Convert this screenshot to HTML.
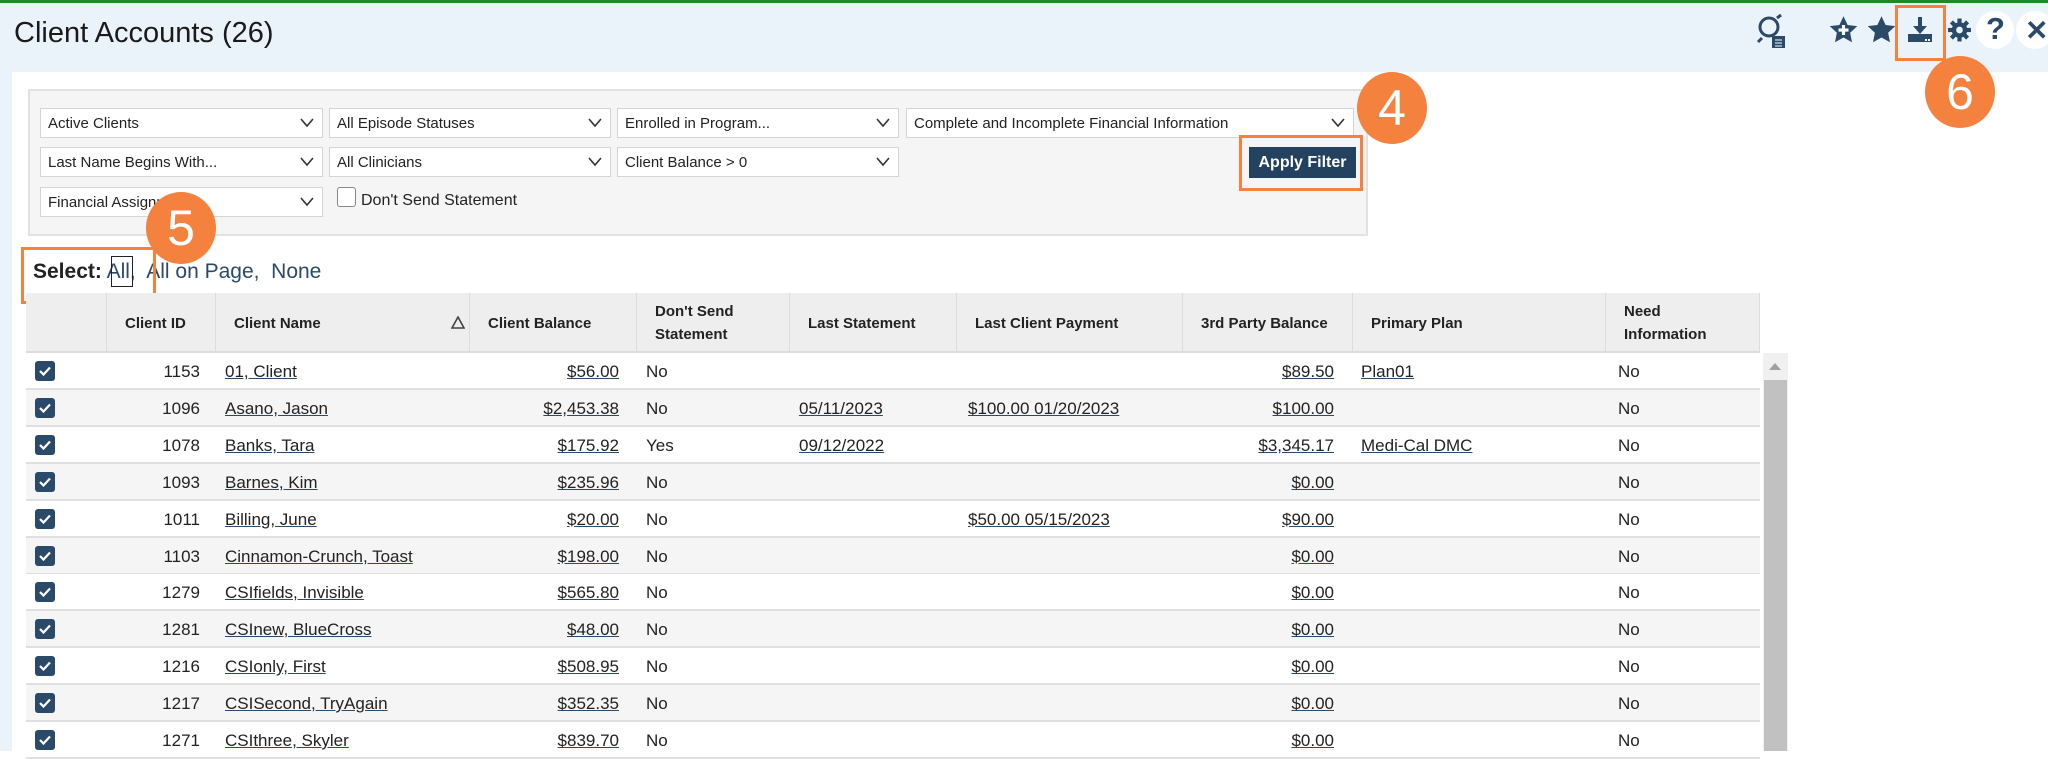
<!DOCTYPE html>
<html><head><meta charset="utf-8"><style>
*{box-sizing:border-box;margin:0;padding:0}
body{width:2048px;height:751px;overflow:hidden;background:#fff;font-family:"Liberation Sans",sans-serif;color:#222;position:relative}
.a{position:absolute;white-space:nowrap}
.dd{position:absolute;height:30px;background:#fff;border:1px solid #d4d4d4;font-size:15px;padding:6px 7px;color:#222}
.dd svg{position:absolute;right:8px;top:9px}
.hd{position:absolute;top:293px;height:60px;font-size:15px;font-weight:bold;display:flex;align-items:center;border-left:1px solid #ddd;padding-left:18px;line-height:23px}
.row{position:absolute;left:26px;width:1734px;height:37px;border-bottom:2px solid #e0e0e0;font-size:17px}
.row span{position:absolute;top:9px;white-space:nowrap}
.u{text-decoration:underline;text-decoration-color:#2b4a6a}
.cb{position:absolute;left:9px;top:8px;width:20px;height:20px;background:#2b4a6a;border-radius:3px}
.r{text-align:right}
.circ{position:absolute;width:70px;height:72px;border-radius:50%;background:#f5813f;color:#fff;font-size:50px;text-align:center;line-height:72px}
.ob{position:absolute;border:3px solid #f5813f}
</style></head><body>
<div class="a" style="left:0;top:0;width:2048px;height:3px;background:#1d8a2a"></div>
<div class="a" style="left:0;top:3px;width:2048px;height:69px;background:#eaf2fa"></div>
<div class="a" style="left:0;top:72px;width:12px;height:679px;background:#eaf2fa"></div>
<div class="a" style="left:14px;top:17px;font-size:29px;color:#1a1a1a">Client Accounts (26)</div>
<svg class="a" style="left:1755px;top:12px" width="36" height="38" viewBox="0 0 36 38"><circle cx="14" cy="15" r="9" fill="none" stroke="#2b4a6a" stroke-width="3"/><path d="M7 26 L3 30 M22 6 L26 3" stroke="#2b4a6a" stroke-width="3"/><rect x="17" y="24" width="13" height="12" fill="#2b4a6a"/><path d="M20 28h7M20 31h7M20 34h7" stroke="#fff" stroke-width="1"/></svg>
<svg class="a" style="left:1828px;top:15px" width="31" height="30" viewBox="0 0 24 24"><path d="M12 1l3.3 7 7.7.9-5.7 5.3 1.5 7.6L12 18l-6.8 3.8 1.5-7.6L1 8.9 8.7 8z" fill="#2b4a6a"/><path d="M12 8v8M8 12h8" stroke="#fff" stroke-width="2.5"/></svg>
<svg class="a" style="left:1866px;top:15px" width="31" height="30" viewBox="0 0 24 24"><path d="M12 1l3.3 7 7.7.9-5.7 5.3 1.5 7.6L12 18l-6.8 3.8 1.5-7.6L1 8.9 8.7 8z" fill="#2b4a6a"/></svg>
<svg class="a" style="left:1906px;top:15px" width="28" height="28" viewBox="0 0 28 28"><path d="M14 2v14" stroke="#2b4a6a" stroke-width="4"/><path d="M7 11l7 8 7-8z" fill="#2b4a6a"/><rect x="2" y="19" width="24" height="8" fill="#2b4a6a"/><rect x="19" y="24" width="2" height="2" fill="#fff"/><rect x="22" y="24" width="2" height="2" fill="#fff"/></svg>
<div class="ob" style="left:1895px;top:5px;width:51px;height:56px"></div>
<svg class="a" style="left:1947px;top:17px" width="25" height="26" viewBox="0 0 24 24"><circle cx="12" cy="12" r="7.5" fill="#2b4a6a"/><g fill="#2b4a6a"><rect x="10" y="1" width="4" height="22"/><rect x="1" y="10" width="22" height="4"/><rect x="10" y="1" width="4" height="22" transform="rotate(45 12 12)"/><rect x="10" y="1" width="4" height="22" transform="rotate(-45 12 12)"/></g><circle cx="12" cy="12" r="3.2" fill="#eaf2fa"/></svg>
<div class="a" style="left:1976px;top:11px;width:38px;height:38px;border-radius:50%;background:#fff"></div>
<div class="a" style="left:1986px;top:11px;font-size:31px;font-weight:bold;color:#2b4a6a">?</div>
<div class="a" style="left:2016px;top:11px;width:38px;height:38px;border-radius:50%;background:#fff"></div>
<div class="a" style="left:2025px;top:14px;font-size:28px;font-weight:bold;color:#2b4a6a">✕</div>
<div class="a" style="left:28px;top:89px;width:1340px;height:147px;background:#f5f5f5;border:2px solid #e2e2e2"></div>
<div class="dd" style="left:40px;top:108px;width:283px">Active Clients<svg width="14" height="10"><path d="M1 1l6 7 6-7" fill="none" stroke="#333" stroke-width="1.6"/></svg></div>
<div class="dd" style="left:329px;top:108px;width:282px">All Episode Statuses<svg width="14" height="10"><path d="M1 1l6 7 6-7" fill="none" stroke="#333" stroke-width="1.6"/></svg></div>
<div class="dd" style="left:617px;top:108px;width:282px">Enrolled in Program...<svg width="14" height="10"><path d="M1 1l6 7 6-7" fill="none" stroke="#333" stroke-width="1.6"/></svg></div>
<div class="dd" style="left:906px;top:108px;width:448px">Complete and Incomplete Financial Information<svg width="14" height="10"><path d="M1 1l6 7 6-7" fill="none" stroke="#333" stroke-width="1.6"/></svg></div>
<div class="dd" style="left:40px;top:147px;width:283px">Last Name Begins With...<svg width="14" height="10"><path d="M1 1l6 7 6-7" fill="none" stroke="#333" stroke-width="1.6"/></svg></div>
<div class="dd" style="left:329px;top:147px;width:282px">All Clinicians<svg width="14" height="10"><path d="M1 1l6 7 6-7" fill="none" stroke="#333" stroke-width="1.6"/></svg></div>
<div class="dd" style="left:617px;top:147px;width:282px">Client Balance &gt; 0<svg width="14" height="10"><path d="M1 1l6 7 6-7" fill="none" stroke="#333" stroke-width="1.6"/></svg></div>
<div class="dd" style="left:40px;top:187px;width:283px">Financial Assignment...<svg width="14" height="10"><path d="M1 1l6 7 6-7" fill="none" stroke="#333" stroke-width="1.6"/></svg></div>
<div class="a" style="left:337px;top:187px;width:19px;height:20px;border:1px solid #888;border-radius:3px;background:#fff"></div>
<div class="a" style="left:361px;top:192px;font-size:16px">Don't Send Statement</div>
<div class="a" style="left:1249px;top:147px;width:107px;height:31px;background:#22425f;color:#fff;font-size:16px;font-weight:bold;text-align:center;line-height:31px">Apply Filter</div>
<div class="ob" style="left:1239px;top:135px;width:124px;height:56px"></div>
<div class="a" style="left:33px;top:260px;font-size:21px"><b>Select:</b> <span style="color:#2b4a6a">All,&nbsp; All on Page,&nbsp; None</span></div>
<div class="a" style="left:111px;top:256px;width:22px;height:31px;border:1.5px solid #222"></div>
<div class="ob" style="left:21px;top:247px;width:135px;height:57px"></div>
<div class="a" style="left:26px;top:293px;width:1734px;height:60px;background:#eeeeee;border-bottom:2px solid #ddd"></div>
<div class="hd" style="left:106px;width:109px">Client ID</div>
<div class="hd" style="left:215px;width:254px">Client Name<svg style="position:absolute;left:235px;top:23px" width="14" height="13"><path d="M7 1L1 12h12z" fill="none" stroke="#444" stroke-width="1.6"/></svg></div>
<div class="hd" style="left:469px;width:167px">Client Balance</div>
<div class="hd" style="left:636px;width:153px">Don't Send<br>Statement</div>
<div class="hd" style="left:789px;width:167px">Last Statement</div>
<div class="hd" style="left:956px;width:226px">Last Client Payment</div>
<div class="hd" style="left:1182px;width:170px">3rd Party Balance</div>
<div class="hd" style="left:1352px;width:253px">Primary Plan</div>
<div class="hd" style="left:1605px;width:155px;border-right:1px solid #ddd">Need<br>Information</div>
<div class="a" style="left:1763px;top:353px;width:25px;height:398px;background:#f0f0f0"></div>
<div class="a" style="left:1764px;top:380px;width:23px;height:371px;background:#c1c1c1"></div>
<svg class="a" style="left:1768px;top:362px" width="14" height="9"><path d="M7 1L1 8h12z" fill="#a0a0a0"/></svg>
<div id="rows"></div>
<script>
var d=[["1153","01, Client","$56.00","No","","","$89.50","Plan01"],
["1096","Asano, Jason","$2,453.38","No","05/11/2023","$100.00 01/20/2023","$100.00",""],
["1078","Banks, Tara","$175.92","Yes","09/12/2022","","$3,345.17","Medi-Cal DMC"],
["1093","Barnes, Kim","$235.96","No","","","$0.00",""],
["1011","Billing, June","$20.00","No","","$50.00 05/15/2023","$90.00",""],
["1103","Cinnamon-Crunch, Toast","$198.00","No","","","$0.00",""],
["1279","CSIfields, Invisible","$565.80","No","","","$0.00",""],
["1281","CSInew, BlueCross","$48.00","No","","","$0.00",""],
["1216","CSIonly, First","$508.95","No","","","$0.00",""],
["1217","CSISecond, TryAgain","$352.35","No","","","$0.00",""],
["1271","CSIthree, Skyler","$839.70","No","","","$0.00",""]];
var h="";
d.forEach(function(r,i){
var t=353+i*36.9;
h+='<div class="row" style="top:'+t+'px;background:'+(i%2?'#f5f5f5':'#fff')+'"><div class="cb"><svg width="20" height="20"><path d="M5 10l3.5 3.5L15 6.5" fill="none" stroke="#fff" stroke-width="2.2"/></svg></div>'+
'<span class="r" style="right:1560px">'+r[0]+'</span>'+
'<span class="u" style="left:199px">'+r[1]+'</span>'+
'<span class="u r" style="right:1141px">'+r[2]+'</span>'+
'<span style="left:620px">'+r[3]+'</span>'+
(r[4]?'<span class="u" style="left:773px">'+r[4]+'</span>':'')+
(r[5]?'<span class="u" style="left:942px">'+r[5]+'</span>':'')+
'<span class="u r" style="right:426px">'+r[6]+'</span>'+
(r[7]?'<span class="u" style="left:1335px">'+r[7]+'</span>':'')+
'<span style="left:1592px">No</span></div>';
});
document.getElementById("rows").innerHTML=h;
</script>
<div class="circ" style="left:1357px;top:72px">4</div>
<div class="circ" style="left:1925px;top:56px">6</div>
<div class="circ" style="left:146px;top:192px">5</div>
</body></html>
